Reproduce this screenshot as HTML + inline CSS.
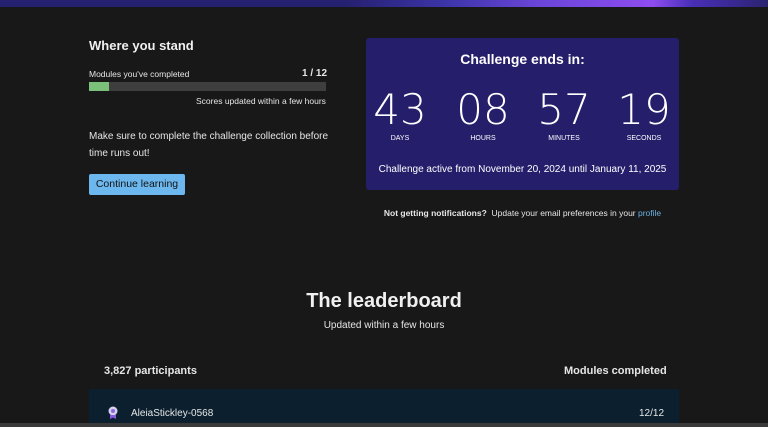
<!DOCTYPE html>
<html><head><meta charset="utf-8"><style>
*{margin:0;padding:0;box-sizing:border-box}
body{width:768px;height:427px;background:#181818;font-family:"Liberation Sans",sans-serif;color:#e6e6e6;position:relative;overflow:hidden}
.abs{position:absolute;white-space:nowrap}
.top{position:absolute;left:0;top:0;width:768px;height:7px;background:linear-gradient(90deg,#262070 0%,#262070 45%,#3b34a8 58%,#6a45d8 70%,#8e4cf0 85%,#4a2fb8 90%,#2a2370 100%)}
.box{position:absolute;left:366px;top:38px;width:313px;height:152px;background:#251e6b;border-radius:3px}
.d{position:absolute;top:88px;font-size:42px;font-family:"DejaVu Sans ExtraLight","DejaVu Sans Light","Liberation Sans",sans-serif;font-weight:200;color:#fff;text-align:center;width:80px;line-height:44px}
.l{position:absolute;top:135px;font-size:7px;color:#fff;text-align:center;width:80px}
</style></head><body>
<div class="top"></div>
<div class="abs" style="left:89px;top:38px;font-size:13px;font-weight:bold;color:#f0f0f0">Where you stand</div>
<div class="abs" style="left:89px;top:69px;font-size:8.5px">Modules you've completed</div>
<div class="abs" style="left:302px;top:68px;font-size:10px;font-weight:bold">1 / 12</div>
<div style="position:absolute;left:89px;top:82px;width:237px;height:9px;background:#3e3e3e"></div>
<div style="position:absolute;left:89px;top:82px;width:20px;height:9px;background:#7ac07a"></div>
<div class="abs" style="left:196px;top:96px;font-size:8.5px">Scores updated within a few hours</div>
<div class="abs" style="left:89px;top:128px;font-size:10px;line-height:17px">Make sure to complete the challenge collection before<br>time runs out!</div>
<div style="position:absolute;left:89px;top:174px;width:96px;height:21px;background:#6cb8ee;border-radius:2px;color:#111;font-size:10.5px;line-height:21px;text-align:center">Continue learning</div>
<div class="box"></div>
<div class="abs" style="left:366px;width:313px;text-align:center;top:51px;font-size:14px;font-weight:bold;color:#fff">Challenge ends in:</div>
<div class="d" style="left:360px">43</div><div class="d" style="left:443px">08</div><div class="d" style="left:524px">57</div><div class="d" style="left:604px">19</div>
<div class="l" style="left:360px">DAYS</div><div class="l" style="left:443px">HOURS</div><div class="l" style="left:524px">MINUTES</div><div class="l" style="left:604px">SECONDS</div>
<div class="abs" style="left:366px;width:313px;text-align:center;top:164px;font-size:10px;color:#fff">Challenge active from November 20, 2024 until January 11, 2025</div>
<div class="abs" style="left:366px;width:313px;text-align:center;top:208px;font-size:8.5px"><b>Not getting notifications?</b>&nbsp; Update your email preferences in your <span style="color:#6cb0e0">profile</span></div>
<div class="abs" style="left:0;width:768px;text-align:center;top:290px;font-size:20px;font-weight:bold;color:#f0f0f0">The leaderboard</div>
<div class="abs" style="left:0;width:768px;text-align:center;top:320px;font-size:10px">Updated within a few hours</div>
<div class="abs" style="left:104px;top:365px;font-size:11px;font-weight:bold">3,827 participants</div>
<div class="abs" style="left:564px;top:365px;font-size:11px;font-weight:bold">Modules completed</div>
<div style="position:absolute;left:89px;top:389px;width:590px;height:34px;background:#0b1f2e"></div>
<svg style="position:absolute;left:108px;top:406px" width="10" height="14"><circle cx="5" cy="5" r="4.5" fill="#d8d0f0"/><circle cx="5" cy="5" r="2" fill="#8a6ad8"/><path d="M2 9 L2 13 L5 11.5 L8 13 L8 9Z" fill="#8a5ae0"/></svg>
<div class="abs" style="left:131px;top:408px;font-size:10px">AleiaStickley-0568</div>
<div class="abs" style="left:639px;top:408px;font-size:10px">12/12</div>
<div style="position:absolute;left:0;top:423px;width:768px;height:4px;background:#3a3a3a"></div>
</body></html>
